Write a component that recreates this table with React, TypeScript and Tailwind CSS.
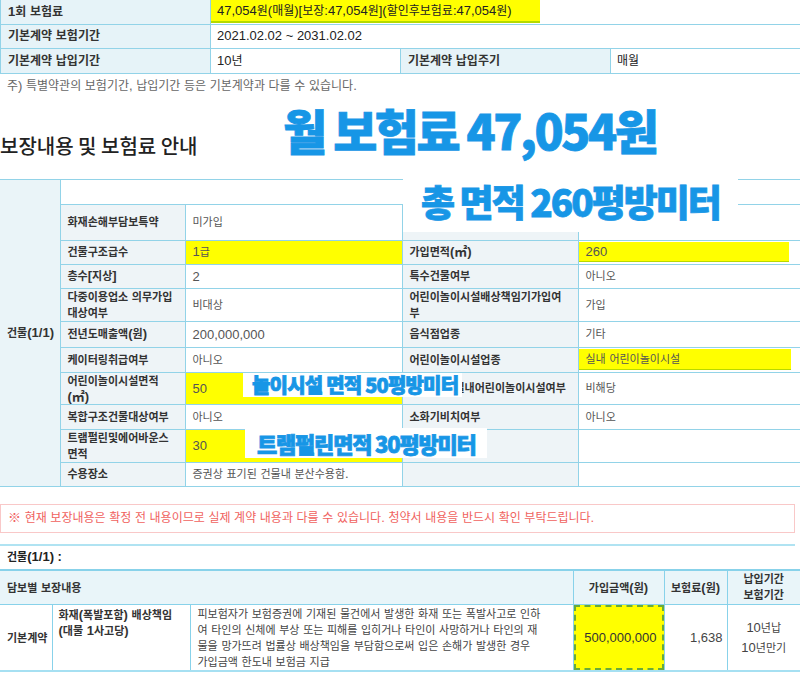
import React from "react";

const HANGUL = /([\u3130-\u318F\uAC00-\uD7A3]+)/;

// Korean runs get their own size so they sit at the same advance as the reference
function K({ t, big }: { t: string; big?: boolean }) {
  return (
    <span>
      {t.split(HANGUL).map((p, i) =>
        i % 2 === 1 ? (
          <span key={i} className={big ? "text-[12px]" : "text-[11px]"}>{p}</span>
        ) : (
          <span key={i}>{p}</span>
        )
      )}
    </span>
  );
}

function Lines({ lines }: { lines: string[] }) {
  return (
    <>
      {lines.map((l, i) => (
        <div key={i}>
          <K t={l} />
        </div>
      ))}
    </>
  );
}

const line = "border border-[#92d3e8]";

function L({ lines }: { lines: string[] }) {
  return (
    <td className={`${line} bg-[#eef4f7] pl-[7px] pr-[1px] font-bold text-[#333] leading-[15px] whitespace-nowrap overflow-hidden`}>
      <Lines lines={lines} />
    </td>
  );
}

function V({ t, yellow }: { t: string; yellow?: boolean }) {
  return (
    <td
      className={`${line} pl-[7px] text-[#555] leading-[15px] whitespace-nowrap ${
        yellow ? "bg-[#ffff00] text-[#333]" : ""
      }`}
    >
      <K t={t} />
    </td>
  );
}

function Partial({ t, w }: { t: string; w: string }) {
  return (
    <td className={`${line} p-0 text-[#555] whitespace-nowrap`}>
      <div className={`${w} h-full flex items-center pl-[7px] bg-[#ffff00] border-b border-[#b8d800]`}>
        <K t={t} />
      </div>
    </td>
  );
}

const blue =
  "bg-white text-[#1796e6] font-black font-['Noto_Sans_CJK_KR',sans-serif] whitespace-nowrap [-webkit-text-stroke:0.8px_#1796e6]";

export default function App() {
  const topLabel = `${line} bg-[#e6f3f8] pl-[7px] font-bold text-[#333] whitespace-nowrap`;
  const topValue = `${line} pl-[6px] text-[#222] whitespace-nowrap`;

  return (
    <div className="relative w-[800px] h-[678px] overflow-hidden bg-white text-[13px] font-['Liberation_Sans','Noto_Sans_CJK_KR',sans-serif]">
      {/* 기본 정보 */}
      <table className="w-[800px] table-fixed border-collapse">
        <colgroup>
          <col className="w-[210px]" />
          <col className="w-[190px]" />
          <col className="w-[210px]" />
          <col className="w-[190px]" />
        </colgroup>
        <tbody>
          <tr className="h-[24px]">
            <td className={`${topLabel} border-t-0`}>
              <K t="1회 보험료" big />
            </td>
            <td colSpan={3} className={`${line} border-t-0 p-0 text-[#222] whitespace-nowrap`}>
              <div className="w-[329px] h-[23px] flex items-center pl-[6px] bg-[#ffff00] border-b-2 border-[#b4da00]">
                <K t="47,054원(매월)[보장:47,054원](할인후보험료:47,054원)" big />
              </div>
            </td>
          </tr>
          <tr className="h-[24px]">
            <td className={topLabel}>
              <K t="기본계약 보험기간" big />
            </td>
            <td colSpan={3} className={topValue}>
              <K t="2021.02.02 ~ 2031.02.02" />
            </td>
          </tr>
          <tr className="h-[25px]">
            <td className={topLabel}>
              <K t="기본계약 납입기간" big />
            </td>
            <td className={topValue}>
              <K t="10년" big />
            </td>
            <td className={topLabel}>
              <K t="기본계약 납입주기" big />
            </td>
            <td className={topValue}>
              <K t="매월" big />
            </td>
          </tr>
        </tbody>
      </table>

      <div className="h-[24px] pl-[7px] leading-[24px] text-[#666]">
        <K t="주) 특별약관의 보험기간, 납입기간 등은 기본계약과 다를 수 있습니다." big />
      </div>

      <div className="h-[81px] grid grid-cols-[283px_1fr]">
        <h2 className="mt-[36px] text-[20px] leading-[24px] font-medium text-[#222] font-['Noto_Sans_CJK_KR',sans-serif] whitespace-nowrap">
          보장내용 및 보험료 안내
        </h2>
        <div className={`mt-[5px] w-fit text-[48px] leading-[52px] tracking-[-2.5px] ${blue}`}>월 보험료 47,054원</div>
      </div>

      {/* 건물 정보 */}
      <table className="w-[800px] table-fixed border-collapse">
        <colgroup>
          <col className="w-[60px]" />
          <col className="w-[125px]" />
          <col className="w-[217px]" />
          <col className="w-[176px]" />
          <col className="w-[222px]" />
        </colgroup>
        <tbody>
          <tr className="h-[25px]">
            <td rowSpan={11} className={`${line} border-l-0 bg-[#eaf4f8] pl-[7px] font-bold text-[#333] whitespace-nowrap`}>
              <K t="건물(1/1)" />
            </td>
            <td colSpan={4} className={line}></td>
          </tr>
          <tr className="h-[36px]">
            <L lines={["화재손해부담보특약"]} />
            <V t="미가입" />
            <L lines={[]} />
            <V t="" />
          </tr>
          <tr className="h-[24px]">
            <L lines={["건물구조급수"]} />
            <V t="1급" yellow />
            <L lines={["가입면적(㎡)"]} />
            <Partial t="260" w="w-[210px]" />
          </tr>
          <tr className="h-[24px]">
            <L lines={["층수[지상]"]} />
            <V t="2" />
            <L lines={["특수건물여부"]} />
            <V t="아니오" />
          </tr>
          <tr className="h-[31px]">
            <L lines={["다중이용업소 의무가입", "대상여부"]} />
            <V t="비대상" />
            <L lines={["어린이놀이시설배상책임기가입여", "부"]} />
            <V t="가입" />
          </tr>
          <tr className="h-[26px]">
            <L lines={["전년도매출액(원)"]} />
            <V t="200,000,000" />
            <L lines={["음식점업종"]} />
            <V t="기타" />
          </tr>
          <tr className="h-[25px]">
            <L lines={["케이터링취급여부"]} />
            <V t="아니오" />
            <L lines={["어린이놀이시설업종"]} />
            <Partial t="실내 어린이놀이시설" w="w-[212px]" />
          </tr>
          <tr className="h-[30px]">
            <L lines={["어린이놀이시설면적", "(㎡)"]} />
            <V t="50" yellow />
            <td className={`${line} bg-[#eef4f7] pl-[52px] font-bold text-[#333] whitespace-nowrap overflow-hidden`}>
              <K t="실내어린이놀이시설여부" />
            </td>
            <V t="비해당" />
          </tr>
          <tr className="h-[25px]">
            <L lines={["복합구조건물대상여부"]} />
            <V t="아니오" />
            <L lines={["소화기비치여부"]} />
            <V t="아니오" />
          </tr>
          <tr className="h-[32px]">
            <L lines={["트램펄린및에어바운스", "면적"]} />
            <V t="30" yellow />
            <L lines={[]} />
            <V t="" />
          </tr>
          <tr className="h-[24px]">
            <L lines={["수용장소"]} />
            <V t="증권상 표기된 건물내 분산수용함." />
            <L lines={[]} />
            <V t="" />
          </tr>
        </tbody>
      </table>

      <div className="mt-[17px] w-[795px] h-[29px] border border-[#f9c8c8] pl-[7px] flex items-center text-[#f0625e] whitespace-nowrap">
        <K t="※ 현재 보장내용은 확정 전 내용이므로 실제 계약 내용과 다를 수 있습니다. 청약서 내용을 반드시 확인 부탁드립니다." big />
      </div>

      <div className="mt-[11px] w-[795px] border-t-2 border-[#b0e3f2]"></div>
      <div className="h-[23px] pl-[7px] flex items-center font-bold text-[#222]">
        <K t="건물(1/1) :" />
      </div>

      {/* 담보별 보장내용 */}
      <table className="w-[800px] table-fixed border-collapse">
        <colgroup>
          <col className="w-[52px]" />
          <col className="w-[138px]" />
          <col className="w-[383px]" />
          <col className="w-[91px]" />
          <col className="w-[63px]" />
          <col className="w-[73px]" />
        </colgroup>
        <tbody>
          <tr className="h-[35px] bg-[#e9f5f9] font-bold text-[#333]">
            <td colSpan={3} className="border-t-2 border-r border-[#88d2ea] pl-[7px] whitespace-nowrap">
              <K t="담보별 보장내용" />
            </td>
            <td className="border-t-2 border-r border-[#88d2ea] text-center whitespace-nowrap">
              <K t="가입금액(원)" />
            </td>
            <td className="border-t-2 border-r border-[#88d2ea] text-center whitespace-nowrap">
              <K t="보험료(원)" />
            </td>
            <td className="border-t-2 border-[#88d2ea] text-center leading-[16px] whitespace-nowrap">
              <Lines lines={["납입기간", "보험기간"]} />
            </td>
          </tr>
          <tr className="h-[65px] border-b-2 border-[#a6e0f2]">
            <td className="border-t border-r border-[#88d2ea] pl-[7px] font-bold text-[#333] whitespace-nowrap">
              <K t="기본계약" />
            </td>
            <td className="border-t border-r border-[#88d2ea] align-top pt-[2px] pl-[6px] font-bold text-[#333] leading-[16px] whitespace-nowrap">
              <Lines lines={["화재(폭발포함) 배상책임", "(대물 1사고당)"]} />
            </td>
            <td className="border-t border-r border-[#88d2ea] align-top pt-[1px] pl-[7px] text-[#444] leading-[16px] whitespace-nowrap">
              <Lines
                lines={[
                  "피보험자가 보험증권에 기재된 물건에서 발생한 화재 또는 폭발사고로 인하",
                  "여 타인의 신체에 부상 또는 피해를 입히거나 타인이 사망하거나 타인의 재",
                  "물을 망가뜨려 법률상 배상책임을 부담함으로써 입은 손해가 발생한 경우",
                  "가입금액 한도내 보험금 지급",
                ]}
              />
            </td>
            <td className="border-t border-r border-[#88d2ea] p-0">
              <div className="h-[65px] flex items-center justify-end pr-[5px] bg-[#ffff00] border-2 border-dashed border-[#6aab3a] text-[#333]">
                500,000,000
              </div>
            </td>
            <td className="border-t border-r border-[#88d2ea] pr-[4px] text-right text-[#444]">1,638</td>
            <td className="border-t border-[#88d2ea] text-center text-[#444] leading-[19px] whitespace-nowrap">
              <Lines lines={["10년납", "10년만기"]} />
            </td>
          </tr>
        </tbody>
      </table>

      {/* 강조 표시 */}
      <div className={`absolute left-[403px] top-[172px] w-[335px] h-[60px] flex items-center justify-center text-[37px] tracking-[-2px] ${blue}`}>
        총 면적 260평방미터
      </div>
      <div className={`absolute left-[243px] top-[373px] w-[219px] h-[24px] flex items-center pl-[9px] text-[20px] tracking-[-0.8px] ${blue}`}>
        놀이시설 면적 50평방미터
      </div>
      <div className={`absolute left-[245px] top-[428px] w-[242px] h-[30px] flex items-center pl-[12px] text-[22px] tracking-[-1.2px] ${blue}`}>
        트램펄린면적 30평방미터
      </div>
    </div>
  );
}
